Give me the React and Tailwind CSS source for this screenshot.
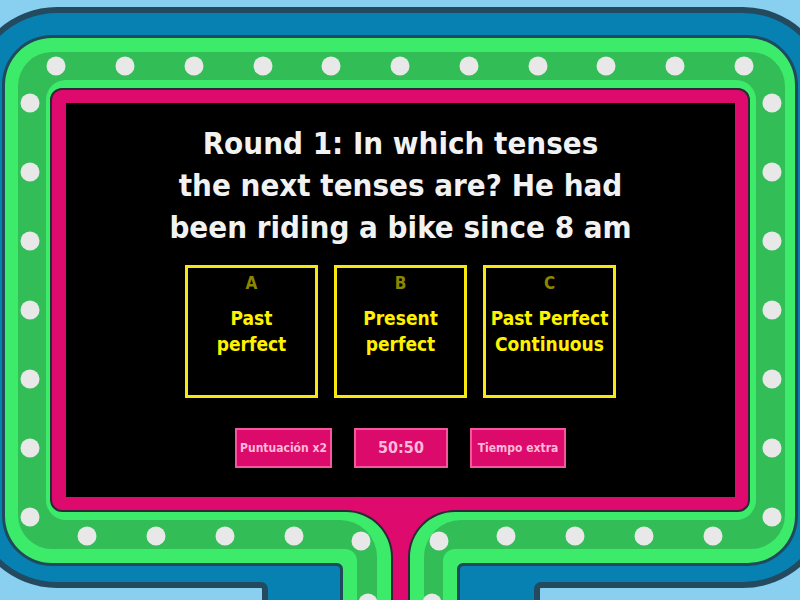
import React from 'react'

// union of a rounded rect and a neck going down, with concave fillets where they meet
function framePath(L, T, R, B, r, nl, nr, f, Y = 640) {
  return [
    `M ${L + r} ${T}`,
    `H ${R - r}`,
    `A ${r} ${r} 0 0 1 ${R} ${T + r}`,
    `V ${B - r}`,
    `A ${r} ${r} 0 0 1 ${R - r} ${B}`,
    `H ${nr + f}`,
    `A ${f} ${f} 0 0 0 ${nr} ${B + f}`,
    `V ${Y}`,
    `H ${nl}`,
    `V ${B + f}`,
    `A ${f} ${f} 0 0 0 ${nl - f} ${B}`,
    `H ${L + r}`,
    `A ${r} ${r} 0 0 1 ${L} ${B - r}`,
    `V ${T + r}`,
    `A ${r} ${r} 0 0 1 ${L + r} ${T}`,
    'Z',
  ].join(' ')
}

const topDots = [56, 125, 194, 263, 331, 400, 469, 538, 606, 675, 744].map(x => [x, 66])
const sideY = [103, 172, 241, 310, 379, 448, 517]
const leftDots = sideY.map(y => [30, y])
const rightDots = sideY.map(y => [772, y])
const bottomDots = [
  [87, 536], [156, 536], [225, 536], [294, 536], [361, 541],
  [439, 541], [506, 536], [575, 536], [644, 536], [713, 536],
  [368, 603], [432, 603],
]

function Frame() {
  return (
    <svg className="absolute inset-0" width="800" height="600" viewBox="0 0 800 600">
      <rect x="0" y="0" width="800" height="600" fill="#89cff0" />
      <path d={framePath(-28, 10, 828, 585, 85, 265, 537, 4)} fill="#0781b1" stroke="#234a5f" strokeWidth="6" />
      <path d={framePath(2, 35, 798, 566, 50, 340, 460, 4)} fill="#1f4a5e" />
      <path d={framePath(5, 38, 795, 563, 47, 343, 457, 6)} fill="#3deb6b" />
      <path d={framePath(18, 52, 785, 549, 34, 357, 443, 12)} fill="#33bd57" />
      <path d={framePath(46, 80, 756, 520, 20, 377, 424, 37)} fill="#3deb6b" />
      <path d={framePath(50, 88, 750, 512, 12, 391, 410, 45)} fill="#2a2a36" />
      <path d={framePath(52, 90, 748, 510, 10, 393, 408, 47)} fill="#de0a6d" />
      {[...topDots, ...leftDots, ...rightDots, ...bottomDots].map(([x, y], i) => (
        <circle key={i} cx={x} cy={y} r="9.5" fill="#e8e8e8" />
      ))}
    </svg>
  )
}

const answers = [
  { key: 'A', lines: ['Past', 'perfect'] },
  { key: 'B', lines: ['Present', 'perfect'] },
  { key: 'C', lines: ['Past Perfect', 'Continuous'] },
]

export default function App() {
  return (
    <div className="relative w-[800px] h-[600px] overflow-hidden bg-[#89cff0] font-['DejaVu_Sans_Condensed','Liberation_Sans_Narrow',sans-serif]">
      <Frame />
      <div className="relative pt-[103px] pl-[66px]">
        <div className="w-[669px] h-[394px] bg-black flex flex-col items-center pt-[19px]">
          <div className="text-[31px] leading-[42px] font-bold text-[#f2f2f2] text-center whitespace-nowrap">
            Round 1: In which tenses<br />
            the next tenses are? He had<br />
            been riding a bike since 8 am
          </div>

          <div className="flex gap-[16px] mt-[17px]">
            {answers.map(a => (
              <div key={a.key} className="w-[133px] h-[133px] border-[3px] border-[#f8e812] flex flex-col items-center pt-[5px]">
                <div className="text-[17px] leading-[20px] font-bold text-[#8d8600]">{a.key}</div>
                <div className="mt-[12px] text-[19px] leading-[26px] font-bold text-[#fff200] text-center whitespace-nowrap">
                  {a.lines[0]}<br />{a.lines[1]}
                </div>
              </div>
            ))}
          </div>

          <div className="flex gap-[22px] mt-[30px]">
            <button className="w-[97px] h-[40px] bg-[#dc0a6b] border-2 border-[#f5579c] text-[#ffb8d8] text-[12px] font-bold">
              Puntuación x2
            </button>
            <button className="w-[94px] h-[40px] bg-[#dc0a6b] border-2 border-[#f5579c] text-[#ffb8d8] text-[16px] font-bold">
              50:50
            </button>
            <button className="w-[96px] h-[40px] bg-[#dc0a6b] border-2 border-[#f5579c] text-[#ffb8d8] text-[12px] font-bold">
              Tiempo extra
            </button>
          </div>
        </div>
      </div>
    </div>
  )
}
